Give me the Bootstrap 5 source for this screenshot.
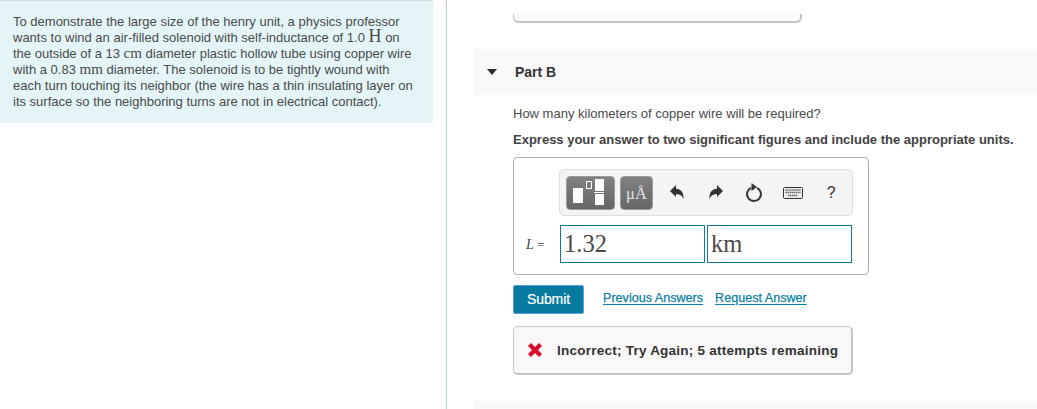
<!DOCTYPE html>
<html lang="en"><head><meta charset="utf-8"><title>Part B</title>
<link href="https://cdn.jsdelivr.net/npm/bootstrap@5.3.0/dist/css/bootstrap.min.css" rel="stylesheet">
<style>
html,body{height:409px;overflow:hidden;background:#fff}
body{font-family:"Liberation Sans",Arial,sans-serif;color:#3d3d3d;font-size:12px}
.shell{height:409px}
.left-pane{width:447px;border-right:1px solid #b4cfe4;flex:none}
.intro{width:433px;height:123px;background:#e4f5f7;border-top:1px solid #d5dde0;padding:13px 19px 0 13px;font-size:13px;line-height:16px;color:#4a4a4a}
.serif-unit{font-family:"Liberation Serif",serif;font-size:15px;line-height:12px}
.serif-big{font-family:"Liberation Serif",serif;font-size:18px;line-height:12px;font-weight:400}
.right-pane{flex:1;min-width:0;position:relative}
.prev-card{margin-left:66px;width:289px;height:9px;margin-top:14px;background:#fafafa;border:1px solid #c4c4c4;border-top:0;border-right-width:2px;border-bottom-width:2px;border-radius:0 0 6px 6px}
.part-head{margin:26px 0 0 26px;height:46px;background:#f8f8f8;padding-left:14px}
.caret{width:0;height:0;border-left:5.5px solid transparent;border-right:5.5px solid transparent;border-top:6px solid #2d2d2d;margin-right:18px}
.part-title{font-size:14px;font-weight:700;color:#333}
.part-body{margin-left:66px;width:510px}
.q{font-size:13px;line-height:16px;margin:11px 0 0;color:#4a4a4a;white-space:nowrap}
.inst{font-size:13px;font-weight:700;line-height:16px;margin:10px 0 0;color:#424242;white-space:nowrap}
.ans-box{margin-top:9px;width:356px;height:118px;border:1px solid #b0b0b0;border-radius:4px;padding:11px 16px 0 11px}
.tools{margin-left:34px;width:294px;height:47px;background:#f4f4f4;border:1px solid #dedede;border-radius:5px;padding:0 6px}
.tool{height:34px;background:linear-gradient(#828283,#666668);border:1px solid #9a9a9a;border-radius:4px;display:flex;align-items:center;justify-content:center;flex:none}
.tool-a{width:49px}
.tool-b{width:33px;margin-left:5px;color:#e4e4e4;font-family:"Liberation Serif",serif;font-size:16.5px;white-space:nowrap;padding-top:3px}
.tool-c{color:#333;font-size:16px;width:38.500px;flex:none;text-align:center;display:flex;justify-content:center;align-items:center}
.tool-first{margin-left:5px}
.ans-row{margin-top:9px}
.var{width:35px;font-size:13px;padding-left:1px;color:#444;font-family:"Liberation Serif",serif;white-space:nowrap}
.var i{font-size:14px}
.field{width:145px;height:38px;border:1px solid #0a7c9c;font-family:"Liberation Serif",serif;font-size:24.500px;line-height:36px;padding-left:3px;color:#4a4a4a;background:#fff}
.field+.field{margin-left:2px;padding-left:3px}
.submit-row{margin-top:10px}
.btn.go{background:#0a7ba0;border:1px solid #5f9fe0;color:#fff;font-size:14px;font-weight:400;width:71px;height:29px;padding:0;border-radius:2px;letter-spacing:-.1px;-webkit-text-stroke:.2px #fff}
.actions{margin:0 0 0 19px;padding-bottom:3px}
.actions a{color:#0d7fa3;font-size:12.600px;margin-right:12px;text-underline-offset:2px;font-weight:400;-webkit-text-stroke:.25px #0d7fa3}
.feedback{margin-top:12px;width:340px;height:49px;background:#f8f8f8;border:1px solid #c8c8c8;border-right:2px solid #c4c4c4;border-bottom:2px solid #c4c4c4;border-radius:5px;padding-left:14px}
.feedback span{font-size:13.500px;font-weight:700;color:#333;margin-left:15px;white-space:nowrap;letter-spacing:.24px;padding-top:3px}
.next-strip{position:absolute;left:26px;right:0;top:401px;height:8px;background:#f8f8f8}
</style></head>
<body>
<div class="shell d-flex">
 <div class="left-pane">
  <div class="intro">To demonstrate the large size of the henry unit, a physics professor wants to wind an air-filled solenoid with self-inductance of 1.0 <span class="serif-big">H</span> on the outside of a 13 <span class="serif-unit">cm</span> diameter plastic hollow tube using copper wire with a 0.83 <span class="serif-unit">mm</span> diameter. The solenoid is to be tightly wound with each turn touching its neighbor (the wire has a thin insulating layer on its surface so the neighboring turns are not in electrical contact).</div>
 </div>
 <div class="right-pane">
  <div class="prev-card"></div>
  <div class="part-head d-flex align-items-center"><span class="caret"></span><span class="part-title">Part B</span></div>
  <div class="part-body">
   <p class="q">How many kilometers of copper wire will be required?</p>
   <p class="inst">Express your answer to two significant figures and include the appropriate units.</p>
   <div class="ans-box">
    <div class="tools d-flex align-items-center">
     <div class="tool tool-a"><svg width="47" height="32" viewBox="0 0 47 32"><rect x="6" y="11" width="10" height="15" fill="#fff"/><rect x="19.500" y="4.500" width="5" height="7" fill="none" stroke="#fff"/><rect x="28" y="2" width="9" height="12" fill="#fff"/><rect x="27" y="15" width="10" height="1" fill="#fff"/><rect x="28" y="17" width="9" height="11" fill="#fff"/></svg></div>
     <div class="tool tool-b">μÅ</div>
     <div class="tool-c tool-first"><svg width="14" height="16" viewBox="0 0 14 16"><path d="M0 6 6 0v3.800c5 .2 8 3.700 7.500 10.700-1-3.500-3-5.300-7.500-5.500V12z" fill="#333"/></svg></div>
     <div class="tool-c"><svg width="14" height="16" viewBox="0 0 14 16"><path d="M14 6 8 0v3.800C3 4 0 7.500.5 14.500c1-3.500 3-5.300 7.500-5.500V12z" fill="#333"/></svg></div>
     <div class="tool-c"><svg width="18" height="20" viewBox="0 0 18 20"><path d="M6 4.800a7 7 0 1 0 6 0" fill="none" stroke="#333" stroke-width="2"/><path d="M6.500 0 12 4 6.500 8z" fill="#333"/></svg></div>
     <div class="tool-c"><svg width="20" height="12" viewBox="0 0 20 12"><rect x=".5" y=".5" width="19" height="11" rx="1" fill="#eee" stroke="#333"/><path d="M2.500 3h15M2.500 5.500h15M5 8.500h10" stroke="#555" stroke-width="1.300" stroke-dasharray="1.300 .7"/></svg></div>
     <div class="tool-c">?</div>
    </div>
    <div class="ans-row d-flex align-items-center">
     <div class="var"><i>L</i> =</div>
     <div class="field">1.32</div>
     <div class="field">km</div>
    </div>
   </div>
   <div class="submit-row d-flex align-items-center">
    <button class="btn go" type="button">Submit</button>
    <div class="actions"><a href="#">Previous Answers</a><a href="#">Request Answer</a></div>
   </div>
   <div class="feedback d-flex align-items-center">
    <svg width="14" height="14" viewBox="0 0 14 14"><path d="M3 0 7 4l4-4 3 3-4 4 4 4-3 3-4-4-4 4-3-3 4-4-4-4z" fill="#d80b2a"/></svg>
    <span>Incorrect; Try Again; 5 attempts remaining</span>
   </div>
  </div>
  <div class="next-strip"></div>
 </div>
</div>
<script src="https://cdn.jsdelivr.net/npm/bootstrap@5.3.0/dist/js/bootstrap.bundle.min.js"></script>
</body></html>
